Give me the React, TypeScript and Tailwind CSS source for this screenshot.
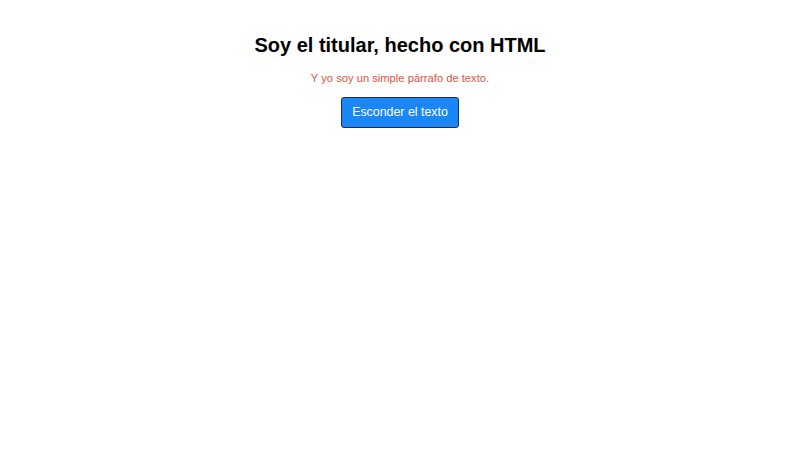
import React from "react";

export default function App() {
  const [visible, setVisible] = React.useState(true);

  return (
    <div className="flex flex-col items-center bg-white pt-[35px] font-['Liberation_Sans',Arial,sans-serif]">
      <h1 className="text-[20px] font-bold leading-[20px] text-black">
        Soy el titular, hecho con HTML
      </h1>
      <p
        className={`mt-[18px] text-[11.2px] leading-[11.2px] text-[#e0553d] ${visible ? "" : "invisible"}`}
      >
        Y yo soy un simple párrafo de texto.
      </p>
      <button
        onClick={() => setVisible(!visible)}
        className="mt-[13px] flex h-[31px] w-[118px] items-center justify-center rounded-[3px] border border-[#14325f] bg-[#1b86f6] text-[12.4px] text-white"
      >
        {visible ? "Esconder el texto" : "Mostrar el texto"}
      </button>
    </div>
  );
}
